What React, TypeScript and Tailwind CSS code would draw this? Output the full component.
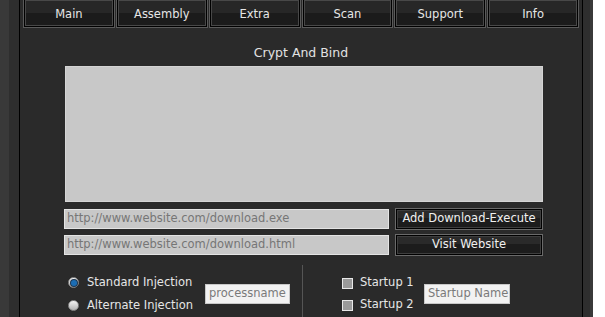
const tabs = ["Main", "Assembly", "Extra", "Scan", "Support", "Info"];

const font = { fontFamily: '"DejaVu Sans", Verdana, sans-serif' };

function Tab({ label }: { label: string }) {
    return (
        <div className="border border-[#5a5a5a] bg-black p-px h-[30px]">
            <div className="h-full border border-[#484848] bg-[linear-gradient(to_bottom,#272727_50%,#1b1b1b_50%)] flex items-center justify-center pt-[3px] text-[11.5px] text-[#e6e6e6]">
                {label}
            </div>
        </div>
    );
}

function DarkButton({ label }: { label: string }) {
    return (
        <div className="w-[148px] h-[22px] border border-[#6a6a6a] bg-black p-px">
            <div className="h-full border border-[#3e3e3e] bg-[linear-gradient(to_bottom,#2a2a2a_45%,#1c1c1c_45%)] flex items-center justify-center text-[11.5px] text-[#f0f0f0] whitespace-nowrap">
                {label}
            </div>
        </div>
    );
}

function UrlInput({ value }: { value: string }) {
    return (
        <div className="w-[325px] h-[20px] border border-[#e4e4e4] bg-[#c8c8c8] flex items-center px-[2px] text-[11.5px] text-[#767676] whitespace-nowrap">
            {value}
        </div>
    );
}

function Radio({ checked, label }: { checked?: boolean; label: string }) {
    return (
        <div className="h-[23px] flex items-center gap-[8px]">
            <div className="shrink-0 w-[11px] h-[11px] rounded-full border border-[#8a8a8a] bg-[linear-gradient(to_bottom,#f4f4f4,#b4b4b4)] flex items-center justify-center">
                {checked && (
                    <div className="w-[6px] h-[6px] rounded-full bg-[#1c6db3] ring-1 ring-[#1b3550]" />
                )}
            </div>
            <span className="text-[11.5px] text-[#e6e6e6] whitespace-nowrap">{label}</span>
        </div>
    );
}

function Check({ label }: { label: string }) {
    return (
        <div className="h-[22px] flex items-center gap-[7px]">
            <div className="shrink-0 w-[11px] h-[11px] border border-[#e8e8e8] bg-[#9a9a9a]" />
            <span className="text-[11.5px] text-[#e6e6e6] whitespace-nowrap">{label}</span>
        </div>
    );
}

function SmallBox({ label }: { label: string }) {
    return (
        <div className="h-[20px] border border-[#c8c8c8] bg-[#f2f2f2] flex items-center px-[3px] text-[11.5px] text-[#7a7a7a] whitespace-nowrap">
            {label}
        </div>
    );
}

export default function App() {
    return (
        <div className="w-[605px] h-[317px] bg-white overflow-hidden" style={font}>
            <div className="w-[593px] h-full bg-[#393939] flex pl-[9px] pr-[3px]">
                <div className="flex-1 bg-[#2e2e2e] flex pl-[10px] pr-[7px]">
                    <div className="flex-1 bg-[#2a2a2a] border-l border-r border-black flex flex-col">
                        <div className="grid grid-cols-6 gap-px px-[3px] -mt-[2px]">
                            {tabs.map((t) => (
                                <Tab key={t} label={t} />
                            ))}
                        </div>

                        <div className="mt-[17px] h-[16px] flex items-center justify-center text-[12.5px] text-[#e2e2e2]">
                            Crypt And Bind
                        </div>

                        <div className="mt-[5px] ml-[45px] w-[478px] h-[136px] shrink-0 bg-[#c8c8c8] border border-[#d4d4d4]" />

                        <div className="mt-[6px] ml-[44px] flex flex-col gap-[4px]">
                            <div className="flex items-center gap-[6px]">
                                <UrlInput value="http://www.website.com/download.exe" />
                                <DarkButton label="Add Download-Execute" />
                            </div>
                            <div className="flex items-center gap-[6px]">
                                <UrlInput value="http://www.website.com/download.html" />
                                <DarkButton label="Visit Website" />
                            </div>
                        </div>

                        <div className="mt-[9px] flex flex-1">
                            <div className="w-[282px] flex items-center pl-[48px] pt-[6px] self-start">
                                <div className="w-[125px] flex flex-col">
                                    <Radio checked label="Standard Injection" />
                                    <Radio label="Alternate Injection" />
                                </div>
                                <div className="ml-[12px] w-[85px] mb-[1px]">
                                    <SmallBox label="processname" />
                                </div>
                            </div>
                            <div className="w-px bg-[#555555]" />
                            <div className="flex items-center pl-[39px] pt-[7px] self-start">
                                <div className="w-[70px] flex flex-col">
                                    <Check label="Startup 1" />
                                    <Check label="Startup 2" />
                                </div>
                                <div className="ml-[12px] w-[86px] mb-[1px]">
                                    <SmallBox label="Startup Name" />
                                </div>
                            </div>
                        </div>
                    </div>
                </div>
            </div>
        </div>
    );
}
